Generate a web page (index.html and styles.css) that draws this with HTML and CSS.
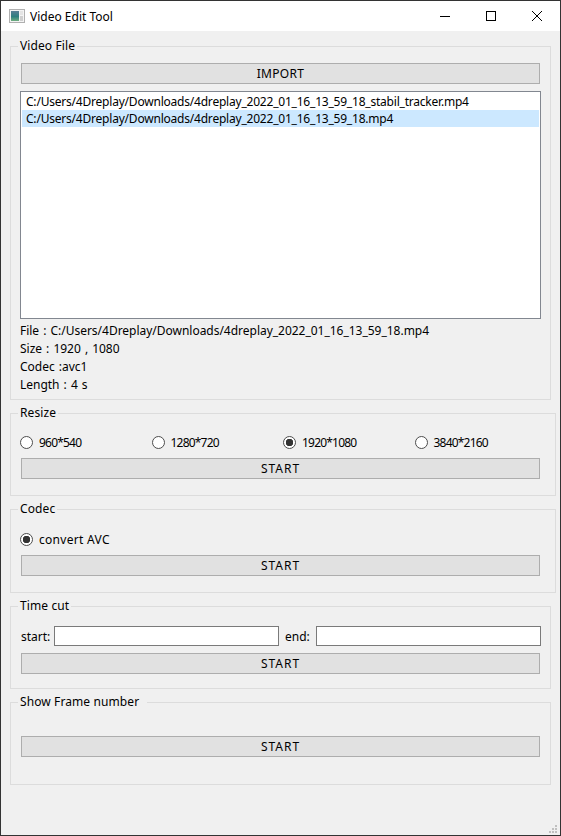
FILE: index.html
```html
<!DOCTYPE html>
<html lang="en">
<head>
  <meta charset="UTF-8" />
  <title>Video Edit Tool</title>
  <link rel="stylesheet" href="styles.css">
</head>
<body>

<div class="window">
  <div class="titlebar">
    <svg class="app-icon" width="16" height="14" viewBox="0 0 16 14">
      <defs>
        <linearGradient id="screen" x1="0" y1="0" x2="0" y2="1">
          <stop offset="0" stop-color="#5a7f96"/>
          <stop offset="0.55" stop-color="#2f7f80"/>
          <stop offset="1" stop-color="#6fae80"/>
        </linearGradient>
      </defs>
      <rect x="0.5" y="0.5" width="15" height="13" fill="#f4f4f4" stroke="#b0b0b0"/>
      <rect x="2" y="2" width="8" height="10" fill="url(#screen)"/>
      <rect x="11" y="2" width="3" height="4" fill="#e4e4e4"/>
      <rect x="11" y="7" width="3" height="5" fill="#cfcfcf"/>
    </svg>
    <span class="title">Video Edit Tool</span>
    <div class="caption-btns">
      <svg width="46" height="30" viewBox="0 0 46 30"><path d="M18 15.5h10" stroke="#000" fill="none"/></svg>
      <svg width="46" height="30" viewBox="0 0 46 30"><rect x="18.5" y="10.5" width="9" height="9" stroke="#000" fill="none"/></svg>
      <svg width="46" height="30" viewBox="0 0 46 30"><path d="M18 10l10 10M28 10l-10 10" stroke="#000" fill="none"/></svg>
    </div>
  </div>

  <div class="content">
    <fieldset class="group">
      <legend>Video File</legend>
      <button class="btn">IMPORT</button>
      <ul class="file-list">
        <li>C:/Users/4Dreplay/Downloads/4dreplay_2022_01_16_13_59_18_stabil_tracker.mp4</li>
        <li class="selected">C:/Users/4Dreplay/Downloads/4dreplay_2022_01_16_13_59_18.mp4</li>
      </ul>
      <div class="info">
        <div>File : C:/Users/4Dreplay/Downloads/4dreplay_2022_01_16_13_59_18.mp4</div>
        <div>Size : 1920 , 1080</div>
        <div>Codec :avc1</div>
        <div>Length : 4 s</div>
      </div>
    </fieldset>

    <fieldset class="group radio-group size-group">
      <legend>Resize</legend>
      <div class="radios">
        <label><input type="radio" name="size">960*540</label>
        <label><input type="radio" name="size">1280*720</label>
        <label><input type="radio" name="size" checked>1920*1080</label>
        <label><input type="radio" name="size">3840*2160</label>
      </div>
      <button class="btn start">START</button>
    </fieldset>

    <fieldset class="group radio-group codec-group">
      <legend>Codec</legend>
      <div class="radios">
        <label><input type="radio" name="codec" checked>convert AVC</label>
      </div>
      <button class="btn start">START</button>
    </fieldset>

    <fieldset class="group time-group">
      <legend>Time cut</legend>
      <div class="time-row">
        <label for="start">start:</label>
        <input id="start" type="text">
        <label for="end">end:</label>
        <input id="end" type="text">
      </div>
      <button class="btn start">START</button>
    </fieldset>

    <fieldset class="group frame-group">
      <legend>Show Frame number</legend>
      <button class="btn start">START</button>
    </fieldset>
  </div>

  <svg class="grip" width="8" height="8" viewBox="0 0 8 8" fill="#c0c0c0">
    <rect x="6" y="0" width="2" height="2"/>
    <rect x="3" y="3" width="2" height="2"/><rect x="6" y="3" width="2" height="2"/>
    <rect x="0" y="6" width="2" height="2"/><rect x="3" y="6" width="2" height="2"/><rect x="6" y="6" width="2" height="2"/>
  </svg>
</div>

</body>
</html>
```

FILE: styles.css
```css
* { box-sizing: border-box; margin: 0; padding: 0; }
html, body {
  height: 100%;
  overflow: hidden;
  background: #f0f0f0;
  font-family: "Noto Sans", sans-serif;
  font-size: 12px;
  color: #000;
}

.window {
  position: relative;
  display: flex;
  flex-direction: column;
  height: 836px;
  border: 1px solid #333;
}

.titlebar {
  display: flex;
  align-items: center;
  height: 30px;
  background: #fff;
  padding-left: 8px;
}
.app-icon { margin-right: 5px; }
.caption-btns { display: flex; margin-left: auto; }

.content {
  display: flex;
  flex-direction: column;
  gap: 4px;
  padding: 6px 9px 0;
}

.group {
  border: 1px solid #dcdcdc;
  padding: 8px 9px 5px;
}
.group legend {
  height: 18px;
  line-height: 18px;
  margin-left: -2px;
  padding: 0 2px;
  letter-spacing: 0.1px;
}
.radio-group { padding-bottom: 16px; }
.time-group { padding-bottom: 14px; }
.frame-group { padding-top: 25px; padding-bottom: 27px; }
.frame-group legend { padding-right: 8px; }

.btn {
  display: block;
  width: 519px;
  height: 21px;
  margin: 0 1px;
  background: #e1e1e1;
  border: 1px solid #adadad;
  font: inherit;
  color: #000;
  letter-spacing: 0.3px;
}
.btn.start { letter-spacing: 1px; }

.file-list {
  list-style: none;
  height: 228px;
  margin-top: 7px;
  background: #fff;
  border: 1px solid #828790;
  padding: 1px;
  letter-spacing: -0.21px;
}
.file-list li { height: 17px; line-height: 17px; padding-left: 4px; }
.file-list .selected { background: #cce8ff; }

.info { margin-top: 3px; word-spacing: 1px; letter-spacing: -0.02px; }
.info div { height: 18px; line-height: 18px; }

.radios {
  display: grid;
  grid-template-columns: repeat(4, 131.5px);
  height: 16px;
  margin: 4px 0 8px;
}
.codec-group .radios { margin-top: 5px; }
.radios label { display: flex; align-items: center; gap: 6px; white-space: nowrap; }
.size-group label { letter-spacing: -0.8px; }
.codec-group label { letter-spacing: 0.3px; }
.radios input {
  appearance: none;
  width: 13px;
  height: 13px;
  background: #fff;
  border: 1px solid #4d4d4d;
  border-radius: 50%;
}
.radios input:checked {
  background: radial-gradient(circle, #333 0 3.5px, #fff 4px);
}

.time-row {
  display: flex;
  align-items: center;
  height: 20px;
  margin: 3px 0 7px;
}
.time-row label { padding-left: 1px; width: 34px; }
.time-row label[for="end"] { width: 37px; padding-left: 6px; }
.time-row input {
  width: 225px;
  height: 20px;
  background: #fff;
  border: 1px solid #7a7a7a;
  outline: none;
}

.grip { position: absolute; right: 3px; bottom: 2px; }
```
